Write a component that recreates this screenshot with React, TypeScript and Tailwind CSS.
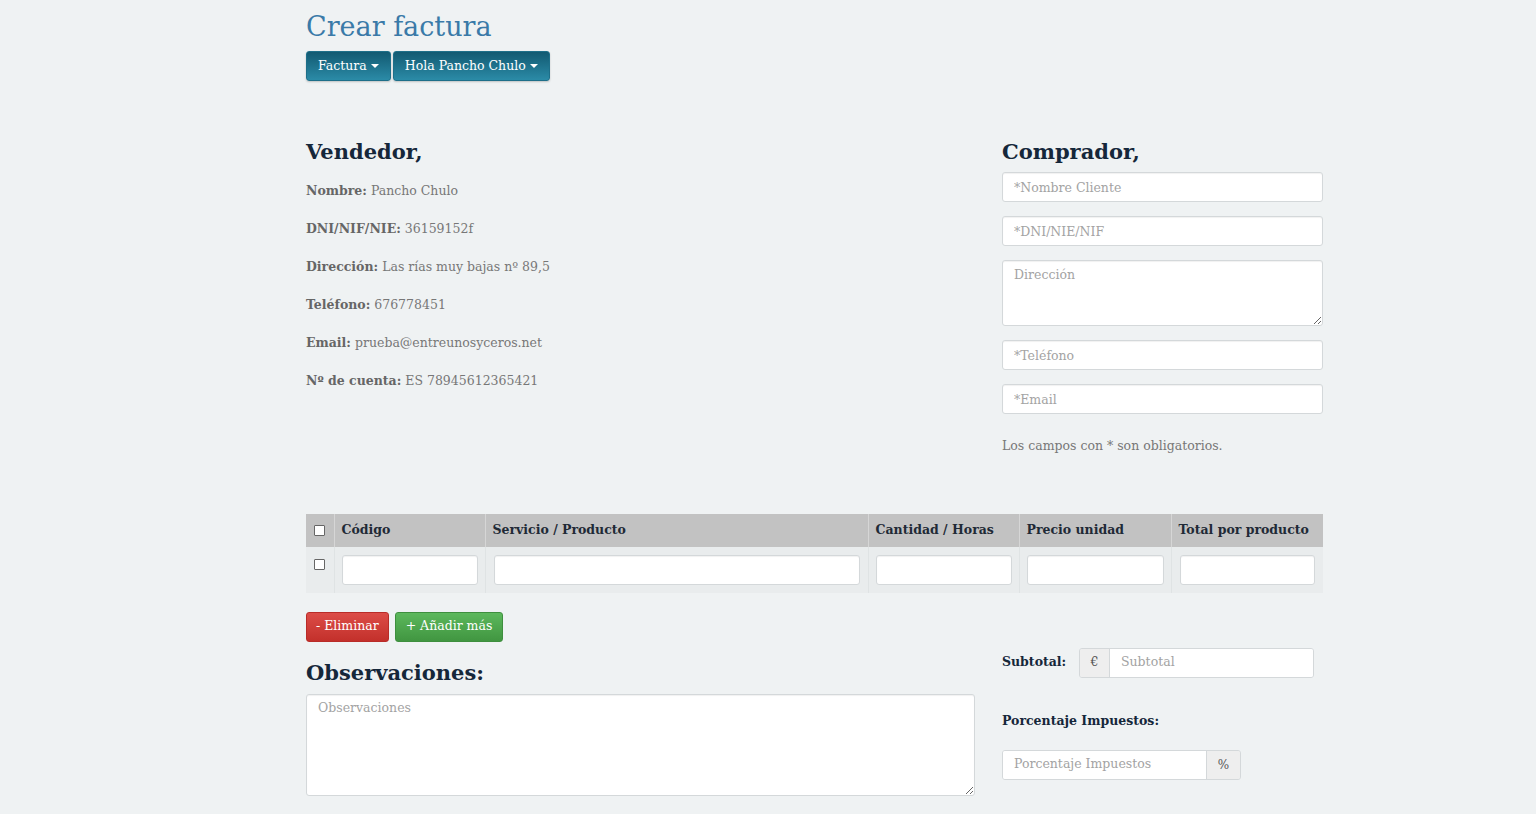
const font = { fontFamily: '"DejaVu Serif", "Liberation Serif", serif' }

function Caret() {
  return <span className="ml-1 inline-block w-0 h-0 border-x-[4px] border-x-transparent border-t-[4px] border-t-white align-middle" />
}

function Field({ placeholder = '', className = '' }: { placeholder?: string; className?: string }) {
  return (
    <input
      placeholder={placeholder}
      className={`block w-full h-[30px] px-[11px] bg-white border border-[#d4d8da] rounded-[3px] shadow-[inset_0_1px_1px_rgba(0,0,0,0.06)] text-[12.5px] text-[#555] placeholder:text-[#a3a3a3] outline-none ${className}`}
      style={font}
    />
  )
}

function Info({ label, value }: { label: string; value: string }) {
  return (
    <p className="text-[12.5px] leading-[18px] text-[#777]">
      <span className="font-bold text-[#666]">{label}</span> {value}
    </p>
  )
}

export default function App() {
  const seller = [
    ['Nombre:', 'Pancho Chulo'],
    ['DNI/NIF/NIE:', '36159152f'],
    ['Dirección:', 'Las rías muy bajas nº 89,5'],
    ['Teléfono:', '676778451'],
    ['Email:', 'prueba@entreunosyceros.net'],
    ['Nº de cuenta:', 'ES 78945612365421'],
  ]

  return (
    <div className="min-h-[814px] bg-[#eff2f3] overflow-hidden" style={font}>
      <div className="ml-[306px] w-[1017px]">
        {/* Header */}
        <h1 className="pt-[10px] text-[27px] leading-[34px] text-[#3a7aa8]">Crear factura</h1>
        <div className="mt-[7px] flex gap-[2px]">
          <button className="h-[30px] px-[11px] text-[12.5px] text-white rounded-[3px] border border-[#1e6f89] bg-gradient-to-b from-[#125a72] to-[#2b8ba7] shadow-[0_1px_2px_rgba(0,0,0,0.2)]">
            Factura<Caret />
          </button>
          <button className="h-[30px] px-[11px] text-[12.5px] text-white rounded-[3px] border border-[#1e6f89] bg-gradient-to-b from-[#125a72] to-[#2b8ba7] shadow-[0_1px_2px_rgba(0,0,0,0.2)]">
            Hola Pancho Chulo<Caret />
          </button>
        </div>

        {/* Vendedor / Comprador */}
        <div className="mt-[56px] flex justify-between">
          <div className="w-[669px]">
            <h2 className="text-[21px] leading-[30px] font-bold text-[#15273a]">Vendedor,</h2>
            <div className="mt-[15px] flex flex-col gap-[20px]">
              {seller.map(([l, v]) => (
                <Info key={l} label={l} value={v} />
              ))}
            </div>
          </div>
          <div className="w-[321px]">
            <h2 className="text-[21px] leading-[30px] font-bold text-[#15273a]">Comprador,</h2>
            <div className="mt-[5px] flex flex-col gap-[14px]">
              <Field placeholder="*Nombre Cliente" />
              <Field placeholder="*DNI/NIE/NIF" />
              <textarea
                placeholder="Dirección"
                className="block w-full h-[66px] px-[11px] py-[5px] bg-white border border-[#d4d8da] rounded-[3px] shadow-[inset_0_1px_1px_rgba(0,0,0,0.06)] text-[12.5px] placeholder:text-[#a3a3a3] outline-none"
                style={font}
              />
              <Field placeholder="*Teléfono" />
              <Field placeholder="*Email" />
            </div>
            <p className="mt-[23px] text-[12.5px] text-[#777]">Los campos con * son obligatorios.</p>
          </div>
        </div>

        {/* Productos */}
        <table className="mt-[58px] w-full border-collapse text-[12.5px]">
          <thead>
            <tr className="bg-[#c2c2c2] h-[33px] text-[#1f2a36]">
              <th className="w-[28px] border-r border-[#d6d6d6]">
                <input type="checkbox" className="block mx-auto w-[11px] h-[11px] appearance-none bg-white border border-[#666] rounded-[1px]" />
              </th>
              <th className="w-[151px] px-[7px] text-left font-bold border-r border-[#d6d6d6]">Código</th>
              <th className="w-[383px] px-[7px] text-left font-bold border-r border-[#d6d6d6]">Servicio / Producto</th>
              <th className="w-[151px] px-[7px] text-left font-bold border-r border-[#d6d6d6]">Cantidad / Horas</th>
              <th className="w-[152px] px-[7px] text-left font-bold border-r border-[#d6d6d6]">Precio unidad</th>
              <th className="px-[7px] text-left font-bold">Total por producto</th>
            </tr>
          </thead>
          <tbody>
            <tr className="bg-[#e9eced] h-[46px]">
              <td className="border-r border-[#dfe3e4] align-top pt-[12px]">
                <input type="checkbox" className="block mx-auto w-[11px] h-[11px] appearance-none bg-white border border-[#666] rounded-[1px]" />
              </td>
              <td className="px-[7px] border-r border-[#dfe3e4]"><Field /></td>
              <td className="px-[8px] border-r border-[#dfe3e4]"><Field /></td>
              <td className="px-[7px] border-r border-[#dfe3e4]"><Field /></td>
              <td className="px-[7px] border-r border-[#dfe3e4]"><Field /></td>
              <td className="px-[8px]"><Field /></td>
            </tr>
          </tbody>
        </table>

        <div className="mt-[19px] flex gap-[6px]">
          <button className="h-[30px] px-[9px] text-[12.5px] text-white rounded-[3px] border border-[#b92c28] bg-gradient-to-b from-[#dc4c47] to-[#c3302b]">
            - Eliminar
          </button>
          <button className="h-[30px] px-[10px] text-[12.5px] text-white rounded-[3px] border border-[#3e8f3e] bg-gradient-to-b from-[#5cb85c] to-[#419641]">
            + Añadir más
          </button>
        </div>

        {/* Observaciones / Totales */}
        <div className="flex justify-between">
          <div className="w-[669px] pt-[16px]">
            <h2 className="text-[21px] leading-[30px] font-bold text-[#15273a]">Observaciones:</h2>
            <textarea
              placeholder="Observaciones"
              className="mt-[6px] block w-full h-[102px] px-[11px] py-[4px] bg-white border border-[#d4d8da] rounded-[3px] shadow-[inset_0_1px_1px_rgba(0,0,0,0.06)] text-[12.5px] placeholder:text-[#a3a3a3] outline-none"
              style={font}
            />
          </div>
          <div className="w-[321px] pt-[6px]">
            <div className="flex items-center">
              <span className="w-[77px] text-[12.5px] font-bold text-[#15273a]">Subtotal:</span>
              <div className="flex w-[235px] h-[30px] border border-[#d4d8da] rounded-[3px] overflow-hidden">
                <span className="w-[30px] flex items-center justify-center bg-[#eeeeee] border-r border-[#d4d8da] text-[12.5px] text-[#555]">€</span>
                <input placeholder="Subtotal" className="flex-1 min-w-0 px-[11px] bg-white text-[12.5px] placeholder:text-[#a3a3a3] outline-none" style={font} />
              </div>
            </div>
            <p className="mt-[34px] text-[12.5px] font-bold text-[#15273a]">Porcentaje Impuestos:</p>
            <div className="mt-[19px] flex w-[239px] h-[30px] border border-[#d4d8da] rounded-[3px] overflow-hidden">
              <input placeholder="Porcentaje Impuestos" className="flex-1 min-w-0 px-[11px] bg-white text-[12.5px] placeholder:text-[#a3a3a3] outline-none" style={font} />
              <span className="w-[34px] flex items-center justify-center bg-[#eeeeee] border-l border-[#d4d8da] text-[12px] text-[#555]">%</span>
            </div>
          </div>
        </div>
      </div>
    </div>
  )
}
